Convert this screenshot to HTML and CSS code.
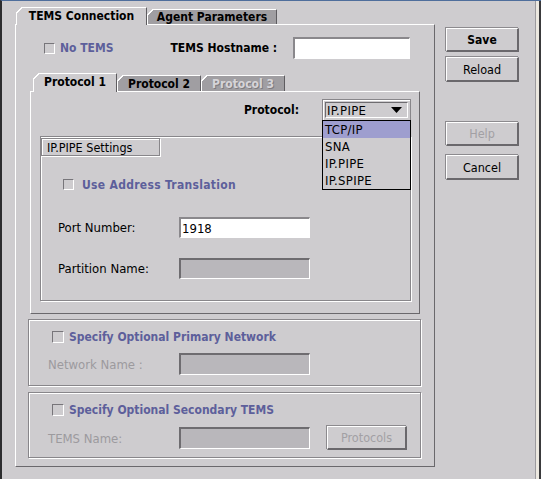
FILE: index.html
```html
<!DOCTYPE html>
<html>
<head>
<meta charset="utf-8">
<link rel="stylesheet" href="styles.css">
</head>
<body>
<div class="window">
  <div class="content">
    <div class="main-tabs">
      <div class="tabrow outer">
        <div class="tab sel t-conn">TEMS Connection</div>
        <div class="tab t-agent">Agent Parameters</div>
      </div>
      <div class="panel main-panel">
        <div class="row-top">
          <span class="chk"></span>
          <span class="blue-b notems">No TEMS</span>
          <span class="bold host-label">TEMS Hostname :</span>
          <span class="input host"></span>
        </div>
        <div class="proto-tabs">
          <div class="tabrow inner">
            <div class="tab sel pt">Protocol 1</div>
            <div class="tab pt">Protocol 2</div>
            <div class="tab pt dis">Protocol 3</div>
          </div>
          <div class="panel proto-panel">
            <div class="proto-row">
              <span class="bold">Protocol:</span>
              <div class="combo">
                <div class="combo-in">
                  <span class="combo-text">IP.PIPE</span>
                  <svg class="arrow" width="11" height="7" viewBox="0 0 11 7"><path d="M0 0H11L5.5 6Z" fill="#000"/></svg>
                </div>
              </div>
            </div>
            <div class="etched settings">
              <div class="etched title">IP.PIPE Settings</div>
              <div class="chk-row">
                <span class="chk"></span>
                <span class="blue-b wide">Use Address Translation</span>
              </div>
              <div class="field-row port">
                <span class="flabel">Port Number:</span>
                <span class="input val">1918</span>
              </div>
              <div class="field-row part">
                <span class="flabel">Partition Name:</span>
                <span class="input off"></span>
              </div>
            </div>
          </div>
        </div>
        <div class="etched opt opt1">
          <div class="opt-chk">
            <span class="chk"></span>
            <span class="blue-b">Specify Optional Primary Network</span>
          </div>
          <div class="opt-field">
            <span class="flabel gray">Network Name :</span>
            <span class="input off"></span>
          </div>
        </div>
        <div class="etched opt opt2">
          <div class="opt-chk">
            <span class="chk"></span>
            <span class="blue-b">Specify Optional Secondary TEMS</span>
          </div>
          <div class="opt-field">
            <span class="flabel gray">TEMS Name:</span>
            <span class="input off"></span>
            <span class="btn small-btn disabled">Protocols</span>
          </div>
        </div>
      </div>
    </div>
    <div class="buttons">
      <span class="btn b-save">Save</span>
      <span class="btn b-reload">Reload</span>
      <span class="btn b-help disabled">Help</span>
      <span class="btn b-cancel">Cancel</span>
    </div>
  </div>
  <div class="edge"></div>
  <ul class="droplist">
    <li class="hl">TCP/IP</li>
    <li>SNA</li>
    <li>IP.PIPE</li>
    <li>IP.SPIPE</li>
  </ul>
</div>
</body>
</html>
```
FILE: styles.css
```css
html, body {
  margin: 0;
  padding: 0;
  background: #cecccf;
}
body {
  font-family: "DejaVu Sans", "Liberation Sans", sans-serif;
  font-stretch: condensed;
  font-size: 13px;
  color: #000;
}
.window {
  position: relative;
  width: 541px;
  height: 479px;
  box-sizing: border-box;
  border-top: 1px solid #4f6e9c;
  border-left: 2px solid #2d2d2f;
  display: flex;
  overflow: hidden;
}
.content {
  flex: 1;
  display: flex;
  padding: 6px 0 0 13px;
}
.edge {
  width: 3px;
  border-left: 1px solid #9c9a9e;
  border-right: 2px solid #3a3a3c;
  background: #ece8e0;
}
.bold { font-weight: bold; font-size: 12px; }
.blue-b { font-weight: bold; font-size: 12px; color: #5d5f9b; }
.blue-b.wide { letter-spacing: 0.3px; }
.gray { color: #9c9a9e; }

/* tabs */
.tabrow {
  display: flex;
  align-items: flex-end;
  padding-left: 1px;
}
.tabrow.outer { height: 17px; }
.tabrow.inner { height: 18px; padding-left: 3px; }
.tab {
  position: relative;
  box-sizing: border-box;
  height: 15px;
  background: #a09ea2;
  border-top: 1px solid #fff;
  border-left: 1px solid #fff;
  border-right: 1px solid #5e5c60;
  font-weight: bold;
  font-size: 12px;
  display: flex;
  align-items: center;
  justify-content: center;
  line-height: 1;
}
.tab::before {
  content: "";
  position: absolute;
  left: -1px;
  top: -1px;
  width: 6px;
  height: 6px;
  background: linear-gradient(135deg, #cecccf 0 48%, #fff 48% 66%, transparent 66%);
}
.tab.sel {
  background: #cecccf;
  height: 18px;
  margin-bottom: -1px;
  z-index: 2;
  padding-bottom: 1px;
}
.inner .tab { height: 16px; }
.inner .tab.sel { height: 19px; padding-bottom: 2px; }
.t-conn { width: 131px; }
.t-agent { width: 130px; }
.pt { width: 84px; }
.tab.dis {
  color: #d6d4d8;
  text-shadow: 1px 1px 0 #7e7c80;
}

.panel {
  box-sizing: border-box;
  border-top: 1px solid #fff;
  border-left: 1px solid #fff;
  border-right: 1px solid #6a686c;
  border-bottom: 1px solid #6a686c;
}
.main-tabs { width: 420px; }
.main-panel {
  height: 443px;
  padding: 12px 0 0 0;
}

.row-top {
  display: flex;
  align-items: center;
  height: 22px;
  padding-left: 28px;
}
.chk {
  display: inline-block;
  box-sizing: border-box;
  width: 11px;
  height: 11px;
  border-top: 1px solid #77757a;
  border-left: 1px solid #77757a;
  border-right: 1px solid #fff;
  border-bottom: 1px solid #fff;
  flex: none;
}
.notems { margin-left: 5px; }
.host-label { margin-left: 57px; }
.input {
  display: inline-flex;
  align-items: center;
  box-sizing: border-box;
  background: #fff;
  border-top: 2px solid #8a888c;
  border-left: 2px solid #8a888c;
  border-right: 1px solid #fff;
  border-bottom: 1px solid #fff;
  flex: none;
}
.host {
  width: 117px;
  height: 22px;
  margin-left: auto;
  margin-right: 24px;
}

.proto-tabs {
  margin: 14px 0 0 14px;
  width: 390px;
}
.proto-panel {
  height: 223px;
  padding-top: 7px;
}
.proto-row {
  display: flex;
  align-items: center;
  justify-content: flex-end;
  padding-right: 8px;
  height: 22px;
}
.proto-row .bold { margin-right: 23px; }
.combo {
  box-sizing: border-box;
  width: 89px;
  height: 22px;
  border: 1px solid #88868a;
  box-shadow: inset 1px 1px 0 #fff;
  padding: 2px;
}
.combo-in {
  box-sizing: border-box;
  height: 100%;
  border-top: 1px solid #6e6c70;
  border-left: 1px solid #6e6c70;
  border-right: 1px solid #fff;
  border-bottom: 1px solid #fff;
  display: flex;
  align-items: center;
  justify-content: space-between;
  padding: 0 5px 0 1px;
  font-size: 13px;
  letter-spacing: 0.3px;
}
.arrow { display: block; }

.etched {
  box-sizing: border-box;
  border: 1px solid #88868a;
  box-shadow: inset 1px 1px 0 #fff, 1px 1px 0 #fff;
}
.settings {
  margin: 15px 0 0 9px;
  width: 371px;
  height: 165px;
  padding-top: 1px;
}
.title {
  width: 119px;
  height: 18px;
  display: flex;
  align-items: center;
  padding-left: 5px;
  font-size: 12.5px;
}
.chk-row {
  display: flex;
  align-items: center;
  gap: 8px;
  margin: 23px 0 0 22px;
  height: 11px;
}
.field-row {
  display: flex;
  align-items: center;
  padding-left: 17px;
}
.flabel { width: 121px; flex: none; }
.field-row .input {
  width: 131px;
  height: 21px;
}
.port { margin-top: 27px; }
.part { margin-top: 20px; }
.input.val { padding-left: 1px; }
.input.off {
  background: #b9b7bb;
  border-top-color: #6e6c70;
  border-left-color: #6e6c70;
}

.opt {
  margin-left: 12px;
  width: 393px;
}
.opt1 { margin-top: 5px; height: 67px; }
.opt2 { margin-top: 6px; height: 66px; }
.opt-chk {
  display: flex;
  align-items: center;
  gap: 5px;
  margin: 11px 0 0 23px;
  height: 12px;
}
.opt-chk .chk { width: 12px; height: 12px; }
.opt-field {
  display: flex;
  align-items: center;
  padding-left: 19px;
  margin-top: 10px;
}
.opt-field .flabel { width: 131px; }
.opt-field .input {
  width: 131px;
  height: 22px;
}
.small-btn {
  margin-left: 17px;
  width: 80px;
  height: 23px;
}

.buttons {
  display: flex;
  flex-direction: column;
  margin-left: 11px;
  padding-top: 21px;
  width: 73px;
}
.btn {
  box-sizing: border-box;
  display: flex;
  align-items: center;
  justify-content: center;
  height: 24px;
  border-top: 1px solid #fff;
  border-left: 1px solid #fff;
  border-right: 2px solid #6a686c;
  border-bottom: 2px solid #6a686c;
  box-shadow: -1px -1px 0 #8c8a8e;
  font-size: 12.5px;
  flex: none;
}
.buttons .btn { width: 73px; }
.b-save { font-weight: bold; font-size: 12px; }
.b-reload { margin-top: 5px; height: 25px; }
.b-help { margin-top: 40px; }
.b-cancel { margin-top: 9px; height: 25px; }
.btn.disabled { color: #a2a0a4; }

.droplist {
  position: absolute;
  left: 320px;
  top: 119px;
  width: 89px;
  margin: 0;
  padding: 0;
  list-style: none;
  box-sizing: border-box;
  border: 1px solid #000;
  background: #cecccf;
  z-index: 10;
  font-size: 13px;
  letter-spacing: 0.3px;
}
.droplist li {
  height: 17px;
  line-height: 17px;
  padding-left: 2px;
}
.droplist li.hl { background: #9e9ecf; }
```
